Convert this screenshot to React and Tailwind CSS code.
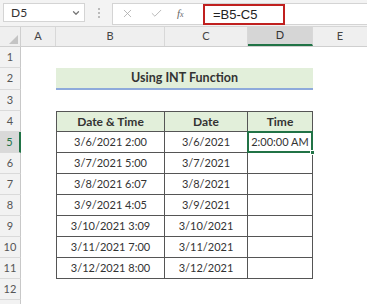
import { X, Check, ChevronDown } from 'lucide-react'

const cols = [
  { key: 'A', w: 'w-[35px]' },
  { key: 'B', w: 'w-[109px]' },
  { key: 'C', w: 'w-[83px]' },
  { key: 'D', w: 'w-[65px]' },
]

const data = [
  ['3/6/2021 2:00', '3/6/2021', '2:00:00 AM'],
  ['3/7/2021 5:00', '3/7/2021', ''],
  ['3/8/2021 6:07', '3/8/2021', ''],
  ['3/9/2021 4:05', '3/9/2021', ''],
  ['3/10/2021 3:09', '3/10/2021', ''],
  ['3/11/2021 7:00', '3/11/2021', ''],
  ['3/12/2021 8:00', '3/12/2021', ''],
]

function RowHead({ n, active }) {
  return (
    <div
      className={`w-[21px] shrink-0 h-full flex items-center justify-center text-[11px] border-b border-[#dadada] ${
        active ? 'bg-[#d9d9d9] border-r-2 border-r-[#217346] text-[#217346]' : 'bg-[#f2f2f2] border-r border-r-[#c8c8c8] text-[#555]'
      }`}
    >
      {n}
    </div>
  )
}

export default function App() {
  return (
    <div className="w-[367px] h-[304px] overflow-hidden bg-white" style={{ fontFamily: 'Lato, "Open Sans", sans-serif' }}>
      {/* formula bar */}
      <div className="h-[27px] bg-[#f3f3f3] flex items-start pt-[3px] border-b border-[#d6d6d6]">
        <div className="ml-[3px] w-[82px] h-[19px] bg-white border border-[#d4d4d4] flex items-center pl-[7px] pr-[3px] text-[12px] text-[#333]">
          <span className="flex-1">D5</span>
          <ChevronDown size={10} strokeWidth={3} className="text-[#777]" />
        </div>
        <div className="w-[27px] h-[19px] flex flex-col items-center justify-center gap-[2px]">
          <span className="w-[2px] h-[2px] bg-[#bbb]" />
          <span className="w-[2px] h-[2px] bg-[#bbb]" />
          <span className="w-[2px] h-[2px] bg-[#bbb]" />
        </div>
        <div className="flex-1 h-[22px] bg-white border border-[#d4d4d4] border-r-0 flex items-start">
          <div className="w-[90px] h-[19px] flex items-center">
            <X size={13} strokeWidth={1.5} className="ml-[8px] text-[#aaa]" />
            <Check size={13} strokeWidth={1.5} className="ml-[16px] text-[#aaa]" />
            <span className="ml-[14px] text-[11px] italic text-[#666]" style={{ fontFamily: '"Liberation Serif", serif' }}>
              f<span className="text-[8px]">x</span>
            </span>
          </div>
          <div className="w-[82px] h-[21px] border-2 border-[#c0201f] flex items-center pl-[8px] text-[13px] text-[#222]" style={{ fontFamily: '"Liberation Sans", sans-serif' }}>
            =B5-C5
          </div>
        </div>
      </div>

      {/* column headers */}
      <div className="h-[20px] flex bg-[#efefef] border-b border-[#cfcfcf] text-[11px] text-[#444]">
        <div className="w-[21px] shrink-0 border-r border-[#cfcfcf] flex items-end justify-end p-[2px]">
          <div className="w-0 h-0 border-l-[9px] border-l-transparent border-b-[9px] border-b-[#c4c4c4]" />
        </div>
        {cols.map((c) => (
          <div
            key={c.key}
            className={`${c.w} shrink-0 flex items-center justify-center border-r border-[#d8d8d8] ${
              c.key === 'D' ? 'bg-[#d6d6d6] border-b-2 border-b-[#217346] text-[#333]' : ''
            }`}
          >
            {c.key}
          </div>
        ))}
        <div className="flex-1 flex items-center justify-center">E</div>
      </div>

      {/* row 1 */}
      <div className="h-[21px] flex">
        <RowHead n={1} />
      </div>
      {/* row 2: title */}
      <div className="h-[22px] flex">
        <RowHead n={2} />
        <div className="w-[35px] shrink-0" />
        <div className="w-[257px] shrink-0 h-full bg-[#e2efda] border-b-2 border-[#8eaadb] flex items-center justify-center text-[12.5px] font-bold text-[#333]">
          Using INT Function
        </div>
      </div>
      {/* row 3 */}
      <div className="h-[21px] flex">
        <RowHead n={3} />
      </div>
      {/* row 4: table header */}
      <div className="h-[21px] flex">
        <RowHead n={4} />
        <div className="w-[35px] shrink-0" />
        <div className="flex bg-[#e2efda] border border-[#555] text-[12px] font-bold text-[#333]">
          <div className="w-[108px] flex items-center justify-center border-r border-[#555]">Date &amp; Time</div>
          <div className="w-[83px] flex items-center justify-center border-r border-[#555]">Date</div>
          <div className="w-[64px] flex items-center justify-center">Time</div>
        </div>
      </div>
      {/* data rows */}
      {data.map((r, i) => (
        <div key={i} className="h-[21px] flex">
          <RowHead n={i + 5} active={i === 0} />
          <div className="w-[35px] shrink-0" />
          <div className="flex border-x border-b border-[#555] text-[11px] text-[#333]">
            <div className="w-[108px] flex items-center justify-center border-r border-[#555]">{r[0]}</div>
            <div className="w-[83px] flex items-center justify-center border-r border-[#555]">{r[1]}</div>
            <div
              className={`w-[64px] flex items-center justify-center relative whitespace-nowrap ${
                i === 0 ? 'outline-2 outline-[#217346] -outline-offset-1' : ''
              }`}
            >
              {r[2]}
              {i === 0 && <span className="absolute -right-[3px] -bottom-[3px] w-[5px] h-[5px] bg-[#217346] border border-white" />}
            </div>
          </div>
        </div>
      ))}
      {/* row 12 + 13 */}
      <div className="h-[21px] flex">
        <RowHead n={12} />
      </div>
      <div className="h-[21px] flex">
        <RowHead n="" />
      </div>
    </div>
  )
}
